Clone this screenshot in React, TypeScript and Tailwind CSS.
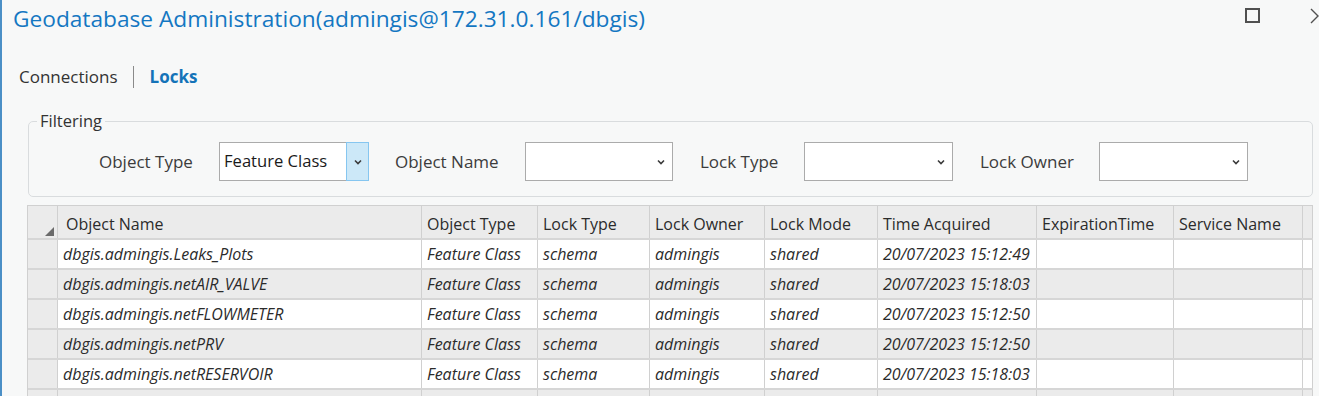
const font = { fontFamily: '"Open Sans", "Noto Sans", sans-serif' };

const cols = [
  { label: "Object Name", w: "w-[364px]", pl: "pl-[8px]" },
  { label: "Object Type", w: "w-[116px]", pl: "pl-[5px]" },
  { label: "Lock Type", w: "w-[112px]", pl: "pl-[5px]" },
  { label: "Lock Owner", w: "w-[115px]", pl: "pl-[5px]" },
  { label: "Lock Mode", w: "w-[113px]", pl: "pl-[5px]" },
  { label: "Time Acquired", w: "w-[159px]", pl: "pl-[5px]" },
  { label: "ExpirationTime", w: "w-[137px]", pl: "pl-[5px]" },
  { label: "Service Name", w: "w-[129px]", pl: "pl-[5px]" },
];

const rows = [
  ["dbgis.admingis.Leaks_Plots", "Feature Class", "schema", "admingis", "shared", "20/07/2023 15:12:49", "", ""],
  ["dbgis.admingis.netAIR_VALVE", "Feature Class", "schema", "admingis", "shared", "20/07/2023 15:18:03", "", ""],
  ["dbgis.admingis.netFLOWMETER", "Feature Class", "schema", "admingis", "shared", "20/07/2023 15:12:50", "", ""],
  ["dbgis.admingis.netPRV", "Feature Class", "schema", "admingis", "shared", "20/07/2023 15:12:50", "", ""],
  ["dbgis.admingis.netRESERVOIR", "Feature Class", "schema", "admingis", "shared", "20/07/2023 15:18:03", "", ""],
  ["", "", "", "", "", "", "", ""],
];

function Chevron() {
  return (
    <svg width="8" height="6" viewBox="0 0 8 6" className="shrink-0">
      <path d="M1 1.5 L4 4.5 L7 1.5" fill="none" stroke="#3a3a3a" strokeWidth="1.6" />
    </svg>
  );
}

function Select({ w, value, active }: { w: string; value?: string; active?: boolean }) {
  return (
    <div className={`${w} h-[39px] flex bg-white border border-[#ababab]`}>
      <div className="flex-1 flex items-center pl-[4px] text-[16.6px] text-[#1a1a1a]">{value}</div>
      {active ? (
        <div className="w-[23px] -my-px -mr-px flex items-center justify-center bg-[#cce8f8] border border-[#86c6f0]">
          <Chevron />
        </div>
      ) : (
        <div className="w-[22px] flex items-center justify-center">
          <Chevron />
        </div>
      )}
    </div>
  );
}

export default function App() {
  return (
    <div
      className="w-[1319px] h-[396px] overflow-hidden bg-[#f7f8f8] border-l-2 border-[#4b8fc6] flex flex-col"
      style={font}
    >
      <div className="h-[38px] flex items-start shrink-0">
        <div className="pl-[11px] pt-[4px] text-[22.7px] leading-[30px] text-[#1477c2] whitespace-nowrap">
          Geodatabase Administration(admingis@172.31.0.161/dbgis)
        </div>
        <div className="ml-auto flex items-start pt-[8px] gap-[50px]">
          <div className="w-[15px] h-[15px] border-2 border-[#505050]" />
          <svg width="10" height="16" viewBox="0 0 10 16" className="-mr-[1px]">
            <path d="M1 1 L8 8 L1 15" fill="none" stroke="#505050" strokeWidth="1.4" />
          </svg>
        </div>
      </div>

      <div className="mt-[27px] h-[24px] flex items-center pl-[17px] text-[17px] shrink-0">
        <span className="text-[#333]">Connections</span>
        <span className="ml-[15px] mr-[16px] w-px h-[22px] bg-[#8a8a8a]" />
        <span className="font-bold text-[#1473b8]">Locks</span>
      </div>

      <fieldset className="mt-[21px] ml-[26px] w-[1285px] border border-[#d9dcde] rounded-[5px] pb-[15px] shrink-0">
        <legend className="ml-[8px] px-[3px] text-[16.5px] leading-[22px] text-[#333]">Filtering</legend>
        <div className="mt-[10px] pl-[70px] flex items-center text-[17px] text-[#3c3c3c]">
          <span className="w-[120px]">Object Type</span>
          <Select w="w-[150px]" value="Feature Class" active />
          <span className="ml-[26px] w-[130px]">Object Name</span>
          <Select w="w-[148px]" />
          <span className="ml-[27px] w-[104px]">Lock Type</span>
          <Select w="w-[149px]" />
          <span className="ml-[27px] w-[119px]">Lock Owner</span>
          <Select w="w-[149px]" />
        </div>
      </fieldset>

      <div className="mt-[8px] ml-[25px] w-[1286px] border-t border-l border-[#d0d0d0] text-[16px] text-[#2b2b2b] shrink-0">
        <div className="flex h-[34px] bg-[#ebebeb] border-b-2 border-[#d6d6d6]">
          <div className="w-[30px] border-r border-[#d0d0d0] flex items-end justify-end pr-[3px] pb-[2px]">
            <svg width="9" height="9" viewBox="0 0 9 9">
              <path d="M9 0 L9 9 L0 9 Z" fill="#6b6b6b" />
            </svg>
          </div>
          {cols.map((c) => (
            <div key={c.label} className={`${c.w} ${c.pl} pt-[3px] border-r border-[#d0d0d0] flex items-center whitespace-nowrap`}>
              {c.label}
            </div>
          ))}
          <div className="w-[10px] border-r border-[#d0d0d0]" />
        </div>
        {rows.map((r, i) => (
          <div
            key={i}
            className={`flex h-[30px] border-b-2 border-[#d6d6d6] ${i % 2 === 1 ? "bg-[#ebebeb]" : "bg-white"}`}
          >
            <div className="w-[30px] bg-[#ebebeb] border-r border-[#d0d0d0]" />
            {cols.map((c, j) => (
              <div
                key={c.label}
                className={`${c.w} pl-[5px] border-r border-[#d0d0d0] flex items-center italic whitespace-nowrap overflow-hidden`}
              >
                {r[j]}
              </div>
            ))}
            <div className="w-[10px] border-r border-[#d0d0d0]" />
          </div>
        ))}
      </div>
    </div>
  );
}
